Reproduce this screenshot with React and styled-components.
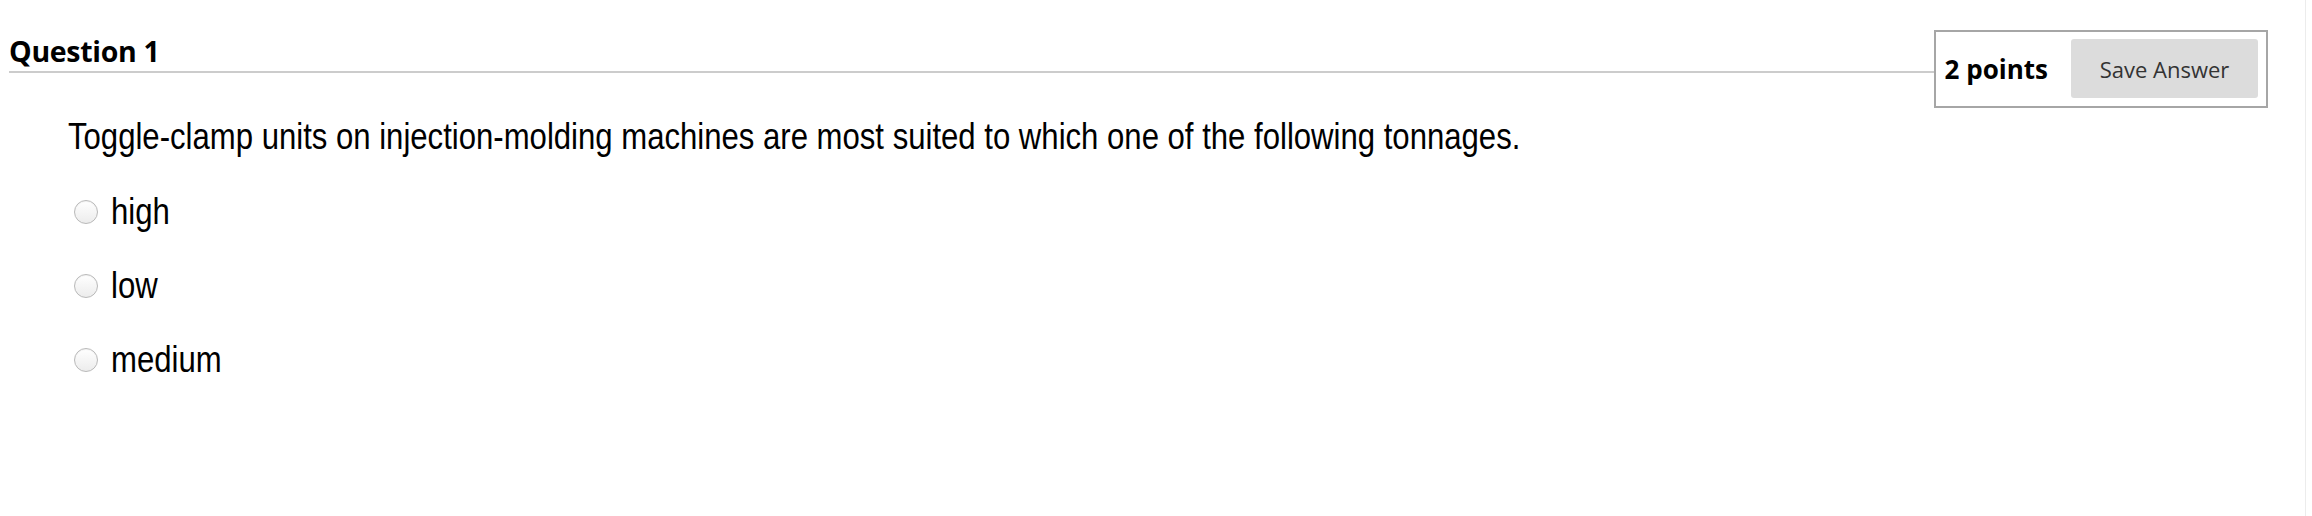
import React from "react";
import styled, { createGlobalStyle } from "styled-components";

const Global = createGlobalStyle`
  html, body { margin: 0; padding: 0; background: #fff; }
  body { width: 2312px; height: 516px; overflow: hidden; }
`;

const Page = styled.div`
  position: relative;
  width: 2312px;
  height: 516px;
  box-sizing: border-box;
  padding: 30px 44px 0 9px;
  &::after {
    content: "";
    position: absolute;
    top: 0;
    bottom: 0;
    right: 6px;
    width: 1px;
    background: #ececec;
  }
`;

const Header = styled.div`
  display: flex;
  align-items: flex-start;
`;

const Title = styled.h3`
  flex: 1;
  margin: 0;
  height: 43px;
  box-sizing: border-box;
  border-bottom: 2px solid #cccccc;
  font-family: "Open Sans", sans-serif;
  font-weight: 700;
  font-size: 28.5px;
  line-height: 29px;
  padding-top: 7px;
  color: #000;
  letter-spacing: -0.3px;
`;

const PointsBox = styled.div`
  display: flex;
  align-items: center;
  gap: 23px;
  border: 2px solid #a6a6a6;
  padding: 7px 8px 8px 9px;
  background: #fff;
`;

const Points = styled.span`
  font-family: "Open Sans", sans-serif;
  font-weight: 700;
  font-size: 26px;
  color: #000;
`;

const SaveButton = styled.button`
  width: 187px;
  height: 59px;
  border: none;
  border-radius: 3px;
  background: #dcdcdc;
  font-family: "Open Sans", sans-serif;
  font-size: 22px;
  color: #333;
  padding: 0;
`;

const Body = styled.div`
  padding: 0 0 0 59px;
  margin-top: 9px;
`;

const Condensed = styled.span`
  display: inline-block;
  white-space: nowrap;
  transform: scaleX(0.864);
  transform-origin: left center;
`;

const QuestionText = styled.p`
  margin: 0;
  font-family: "Liberation Sans", Arial, sans-serif;
  font-size: 36px;
  line-height: 40px;
  color: #000;
`;

const Options = styled.div`
  display: flex;
  flex-direction: column;
  gap: 34px;
  margin-top: 35px;
`;

const Option = styled.label`
  display: flex;
  align-items: center;
  gap: 13px;
  padding-left: 6px;
  font-family: "Liberation Sans", Arial, sans-serif;
  font-size: 36px;
  line-height: 40px;
  color: #000;
`;

const Radio = styled.input.attrs({ type: "radio" })`
  appearance: none;
  -webkit-appearance: none;
  margin: 0;
  width: 24px;
  height: 24px;
  flex: none;
  border-radius: 50%;
  border: 1px solid #b9b9b9;
  background: linear-gradient(#ffffff, #ececec);
  box-shadow: inset 0 1px 1px rgba(0, 0, 0, 0.05);
  box-sizing: border-box;
`;

const options = ["high", "low", "medium"];

export default function App() {
  return (
    <Page>
      <Global />
      <Header>
        <Title>Question 1</Title>
        <PointsBox>
          <Points>2 points</Points>
          <SaveButton>Save Answer</SaveButton>
        </PointsBox>
      </Header>
      <Body>
        <QuestionText>
          <Condensed>
            Toggle-clamp units on injection-molding machines are most suited to which one of the following tonnages.
          </Condensed>
        </QuestionText>
        <Options>
          {options.map((o) => (
            <Option key={o}>
              <Radio name="q1" />
              <Condensed>{o}</Condensed>
            </Option>
          ))}
        </Options>
      </Body>
    </Page>
  );
}
